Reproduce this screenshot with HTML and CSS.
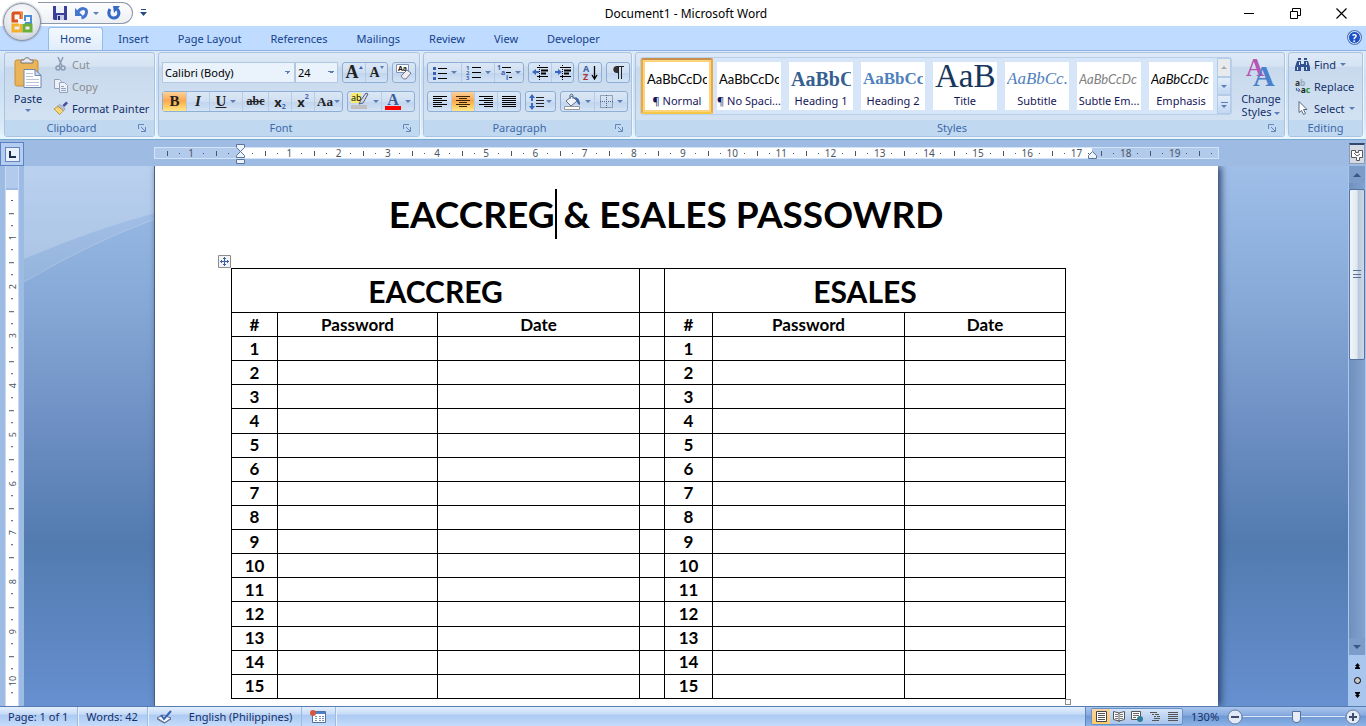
FILE: index.html
```html
<!DOCTYPE html>
<html lang="en">

<head>
    <meta charset="UTF-8">
    <meta name="viewport" content="width=device-width, initial-scale=1.0">
    <title>Document1 - Microsoft Word</title>
    <link rel="stylesheet" href="styles.css">
</head>

<body>
    <header class="titlebar">
        <div class="quick-access">
            <button type="button" aria-label="Save">
                <svg width="14" height="14" viewBox="0 0 14 14"><path d="M0 0h14v14H1L0 13z" fill="#3b3f9c"/><path d="M3 0h8v7H3z" fill="#eef2fb"/><path d="M4 9h7v5H4z" fill="#c5cbe6"/><path d="M5 10h2v4H5z" fill="#25296d"/></svg>
            </button>
            <button type="button" aria-label="Undo" class="undo">
                <svg width="14" height="14" viewBox="0 0 14 14"><path d="M3 6C6 1 12 2 11.500 6c0 3-2 5-5 6" fill="none" stroke="#4576cd" stroke-width="3"/><path d="M0 2v8h8z" fill="#4576cd"/></svg>
                <span class="caret"></span>
            </button>
            <button type="button" aria-label="Repeat">
                <svg width="14" height="14" viewBox="0 0 14 14"><path d="M3 3C0 8 3 12 7 12s7-5 3-9" fill="none" stroke="#3569c5" stroke-width="3"/><path d="M6 0h7L7 7z" fill="#3569c5"/></svg>
            </button>
        </div>
        <button type="button" class="qa-more" aria-label="Customize Quick Access Toolbar">
            <svg width="7" height="8" viewBox="0 0 7 8"><path d="M1 0h5v1H1zM0 3h7L3.500 7z" fill="#234b88"/></svg>
        </button>
        <h1>Document1 - Microsoft Word</h1>
        <div class="window-buttons">
            <button type="button" aria-label="Minimize"><svg width="11" height="11" viewBox="0 0 11 11"><path d="M0 5.500h10" stroke="#000"/></svg></button>
            <button type="button" aria-label="Restore"><svg width="11" height="11" viewBox="0 0 11 11"><path d="M.5 3.500h7v7h-7zM2.500 3V.5h8v7H8" fill="none" stroke="#000"/></svg></button>
            <button type="button" aria-label="Close"><svg width="11" height="11" viewBox="0 0 11 11"><path d="M.5.5l10 10m0-10l-10 10" stroke="#000" stroke-width="1.200"/></svg></button>
        </div>
        <button type="button" class="office-button" aria-label="Office Button">
            <svg width="24" height="24" viewBox="0 0 24 24" fill="none" stroke-width="3">
                <path d="M8 11H3V4q0-1 1-1h7v6" stroke="#d9541c"/>
                <path d="M10 3h2v6" stroke="#f08a3c" stroke-width="2"/>
                <path d="M15 11V6h6v7h-6" stroke="#4a8fd6" stroke-width="2"/>
                <path d="M11 14v7H3v-6h6" stroke="#f3b02b"/>
                <path d="M14 15h7v6h-7v-7" stroke="#6cae3a"/>
            </svg>
        </button>
    </header>

    <nav class="tabs">
        <a href="#home" class="tab active">Home</a>
        <a href="#insert" class="tab">Insert</a>
        <a href="#layout" class="tab">Page Layout</a>
        <a href="#references" class="tab">References</a>
        <a href="#mailings" class="tab">Mailings</a>
        <a href="#review" class="tab">Review</a>
        <a href="#view" class="tab">View</a>
        <a href="#developer" class="tab">Developer</a>
        <button type="button" class="help" aria-label="Help">?</button>
    </nav>

    <div class="ribbon">
        <section class="group clipboard">
            <div class="group-body">
                <button type="button" class="big-button">
                    <svg width="28" height="32" viewBox="0 0 28 32"><rect x="1" y="3" width="23" height="26" rx="2" fill="#eab558" stroke="#c98f38"/><path d="M7 6V3h3c0-3 6-3 6 0h3v3z" fill="#e8e8ec" stroke="#77777f"/><path d="M10 12.500h11l6 6v12H10z" fill="#fff" stroke="#6d87ad"/><path d="M21 12.500v6h6z" fill="#cfdcef" stroke="#6d87ad"/><path d="M12 16.500h7M12 19.500h7M12 22.500h13M12 25.500h13M12 28.500h13" stroke="#b6c4da"/></svg>
                    <span>Paste</span>
                    <span class="caret"></span>
                </button>
                <div class="button-list">
                    <button type="button" disabled>
                        <svg width="14" height="14" viewBox="0 0 14 14" fill="none" stroke="#8c9bb2" stroke-width="1.500"><path d="M4 0l4 9M9 0L5 9"/><circle cx="4" cy="11" r="2"/><circle cx="9" cy="11" r="2"/></svg>
                        Cut
                    </button>
                    <button type="button" disabled>
                        <svg width="14" height="14" viewBox="0 0 14 14" fill="#eef2f8" stroke="#93a2ba"><path d="M.5.5h5l2 2v7h-7z"/><path d="M5.500 3.500h5l3 3v7h-8zM7 7.500h3M7 9.500h5M7 11.500h5"/></svg>
                        Copy
                    </button>
                    <button type="button">
                        <svg width="14" height="14" viewBox="0 0 15 14"><path d="M9 4l4-4 2 2-4 4z" fill="#4b4f9b"/><path d="M6 3l6 5-2 2-6-5z" fill="#b9c2d4" stroke="#6e7a92" stroke-width=".5"/><path d="M4 5l6 5-4 4L0 8z" fill="#f2cb5d" stroke="#a87c25" stroke-width=".7"/><path d="M2 8l5 4M5 7l4 4" stroke="#fff0b0"/></svg>
                        Format Painter
                    </button>
                </div>
            </div>
            <h2>Clipboard <svg class="launcher" width="8" height="8" viewBox="0 0 8 8"><path d="M.5 5V.5H6M3 3l4 4M7.500 3v4.500H3" fill="none" stroke="#6486b8"/></svg></h2>
        </section>

        <section class="group font">
            <div class="group-body rows">
                <div class="row">
                    <div class="combos">
                        <select class="combo font-name" aria-label="Font"><option>Calibri (Body)</option></select>
                        <select class="combo font-size" aria-label="Font size"><option>24</option></select>
                    </div>
                    <div class="set">
                        <button type="button" class="glyph" aria-label="Grow Font"><b class="big-a">A</b><i class="up"></i></button>
                        <button type="button" class="glyph" aria-label="Shrink Font"><b class="small-a">A</b><i class="down"></i></button>
                    </div>
                    <div class="set">
                        <button type="button" aria-label="Clear Formatting"><svg width="18" height="17" viewBox="0 0 18 17"><path d="M1.500.5h12v8h-12z" fill="#fff" stroke="#7d93b8"/><text x="3" y="7" font-size="7" font-weight="bold" fill="#222">Aa</text><path d="M6 12l6-6 4 3-5 6q-3 1-5-3z" fill="#f0edf2" stroke="#77778c"/></svg></button>
                    </div>
                </div>
                <div class="row">
                    <div class="set format">
                        <button type="button" class="glyph on"><b>B</b></button>
                        <button type="button" class="glyph"><em>I</em></button>
                        <button type="button" class="glyph wide"><u>U</u><span class="caret"></span></button>
                        <button type="button" class="glyph strike"><s>abc</s></button>
                        <button type="button" class="glyph sans">x<sub>2</sub></button>
                        <button type="button" class="glyph sans">x<sup>2</sup></button>
                        <button type="button" class="glyph case">Aa<span class="caret"></span></button>
                    </div>
                    <div class="set">
                        <button type="button" class="wide" aria-label="Text Highlight Color"><svg width="18" height="17" viewBox="0 0 18 17"><path d="M0 0h10v10H0z" fill="#f6ee6a"/><text x="0" y="8" font-size="9" fill="#111">ab</text><path d="M15 0l2 1-5 9-4 1 2-4z" fill="#d6dce8" stroke="#555f78"/><path d="M0 12h16v4H0z" fill="#c0c0c0"/></svg><span class="caret"></span></button>
                        <button type="button" class="wide font-color" aria-label="Font Color"><b>A</b><span class="caret"></span></button>
                    </div>
                </div>
            </div>
            <h2>Font <svg class="launcher" width="8" height="8" viewBox="0 0 8 8"><path d="M.5 5V.5H6M3 3l4 4M7.500 3v4.500H3" fill="none" stroke="#6486b8"/></svg></h2>
        </section>

        <section class="group paragraph">
            <div class="group-body rows">
                <div class="row">
                    <div class="set">
                        <button type="button" class="wide" aria-label="Bullets"><svg width="14" height="14" viewBox="0 0 14 14"><path d="M0 1h3v3H0zM0 6h3v3H0zM0 11h3v3H0z" fill="#3b62b0"/><path d="M5 2.500h9M5 7.500h9M5 12.500h9" stroke="#000"/></svg><span class="caret"></span></button>
                        <button type="button" class="wide" aria-label="Numbering"><svg width="15" height="15" viewBox="0 0 15 15"><g font-size="6" font-weight="bold" fill="#3b62b0"><text x="0" y="5">1</text><text x="0" y="10">2</text><text x="0" y="15">3</text></g><path d="M6 2.500h9M6 7.500h9M6 12.500h9" stroke="#000"/></svg><span class="caret"></span></button>
                        <button type="button" class="multi" aria-label="Multilevel List"><svg width="17" height="15" viewBox="0 0 17 15"><g font-size="7" font-weight="bold" fill="#3b62b0"><text x="0" y="5">1</text><text x="4" y="10">a</text><text x="9" y="15">i</text></g><path d="M5 2.500h9M9 7.500h5M12 12.500h3" stroke="#000"/></svg><span class="caret"></span></button>
                    </div>
                    <div class="set">
                        <button type="button" aria-label="Decrease Indent"><svg width="16" height="15" viewBox="0 0 16 15"><path d="M5 2.500h11M5 11.500h11" stroke="#000"/><path d="M9 5.500h7M9 8.500h5" stroke="#000" stroke-width="2"/><path d="M7.500 0v15" stroke="#000" stroke-dasharray="1 1"/><path d="M0 7l4-3v2h3v2H4v2z" fill="#3767bf"/></svg></button>
                        <button type="button" aria-label="Increase Indent"><svg width="16" height="15" viewBox="0 0 16 15"><path d="M5 2.500h11M5 11.500h11" stroke="#000"/><path d="M9 5.500h7M9 8.500h5" stroke="#000" stroke-width="2"/><path d="M7.500 0v15" stroke="#000" stroke-dasharray="1 1"/><path d="M7 7L3 4v2H0v2h3v2z" fill="#3767bf"/></svg></button>
                    </div>
                    <div class="set">
                        <button type="button" aria-label="Sort"><svg width="15" height="17" viewBox="0 0 15 17"><g font-size="9" font-weight="bold"><text x="0" y="8" fill="#3c62a9">A</text><text x="0" y="16" fill="#a73336">Z</text></g><path d="M11.500 2v13M9 11l2.500 4 2.500-4" fill="none" stroke="#000" stroke-width="1.300"/></svg></button>
                    </div>
                    <div class="set">
                        <button type="button" aria-label="Show paragraph marks"><svg width="11" height="13" viewBox="0 0 11 13"><path d="M6 0H4C-1 0-1 7 4 7h2z" fill="#333"/><path d="M5.500 0v13M8.500 0v13M4 .5h7" stroke="#222"/></svg></button>
                    </div>
                </div>
                <div class="row">
                    <div class="set align">
                        <button type="button" aria-label="Align Left"><svg width="14" height="12" viewBox="0 0 14 12"><path d="M0 .5h14M0 2.500h9M0 4.500h14M0 6.500h9M0 8.500h14M0 10.500h9" stroke="#000"/></svg></button>
                        <button type="button" class="on" aria-label="Center"><svg width="14" height="12" viewBox="0 0 14 12"><path d="M0 .5h14M3 2.500h8M0 4.500h14M3 6.500h8M0 8.500h14M3 10.500h8" stroke="#3a2500"/></svg></button>
                        <button type="button" aria-label="Align Right"><svg width="14" height="12" viewBox="0 0 14 12"><path d="M0 .5h14M5 2.500h9M0 4.500h14M5 6.500h9M0 8.500h14M5 10.500h9" stroke="#000"/></svg></button>
                        <button type="button" aria-label="Justify"><svg width="14" height="12" viewBox="0 0 14 12"><path d="M0 .5h14M0 2.500h14M0 4.500h14M0 6.500h14M0 8.500h14M0 10.500h14" stroke="#000"/></svg></button>
                    </div>
                    <div class="set">
                        <button type="button" class="spacing" aria-label="Line spacing"><svg width="15" height="16" viewBox="0 0 15 16"><path d="M3 0l3 4H4v3H2V4H0zM3 16l3-4H4V9H2v3H0z" fill="#3767bf"/><path d="M7 3.500h8M7 6.500h8M7 9.500h8M7 12.500h8" stroke="#222"/></svg><span class="caret"></span></button>
                    </div>
                    <div class="set">
                        <button type="button" class="wide" aria-label="Shading"><svg width="17" height="16" viewBox="0 0 17 16"><path d="M2 7l6-5 5 5-6 5z" fill="#f2f5fa" stroke="#5b6c8b"/><path d="M6 5V1q2-2 3 0v4" fill="none" stroke="#5b6c8b"/><path d="M10 3q6 0 6 8-3-1-3-4z" fill="#3c66a9"/><path d="M.5 12.500h15v3H.5z" fill="#fff" stroke="#999"/></svg><span class="caret"></span></button>
                        <button type="button" class="wide" aria-label="Borders"><svg width="13" height="13" viewBox="0 0 13 13"><path d="M.5.5h12v12H.5zM6.500 0v13M0 6.500h13" fill="none" stroke="#52637e" stroke-dasharray="1 1"/></svg><span class="caret"></span></button>
                    </div>
                </div>
            </div>
            <h2>Paragraph <svg class="launcher" width="8" height="8" viewBox="0 0 8 8"><path d="M.5 5V.5H6M3 3l4 4M7.500 3v4.500H3" fill="none" stroke="#6486b8"/></svg></h2>
        </section>

        <section class="group styles">
            <div class="group-body">
                <div class="gallery">
                    <button type="button" class="style selected"><span class="preview">AaBbCcDc</span><span class="name">¶ Normal</span></button>
                    <button type="button" class="style"><span class="preview">AaBbCcDc</span><span class="name">¶ No Spaci...</span></button>
                    <button type="button" class="style"><span class="preview heading1">AaBbCc</span><span class="name">Heading 1</span></button>
                    <button type="button" class="style"><span class="preview heading2">AaBbCc</span><span class="name">Heading 2</span></button>
                    <button type="button" class="style"><span class="preview title">AaB</span><span class="name">Title</span></button>
                    <button type="button" class="style"><span class="preview subtitle">AaBbCc.</span><span class="name">Subtitle</span></button>
                    <button type="button" class="style"><span class="preview subtle">AaBbCcDc</span><span class="name">Subtle Em...</span></button>
                    <button type="button" class="style"><span class="preview emphasis">AaBbCcDc</span><span class="name">Emphasis</span></button>
                    <div class="gallery-scroll">
                        <button type="button" aria-label="Row up" disabled><i class="up"></i></button>
                        <button type="button" aria-label="Row down"><span class="caret"></span></button>
                        <button type="button" aria-label="More styles" class="more"><span class="caret"></span></button>
                    </div>
                </div>
                <button type="button" class="big-button">
                    <svg width="30" height="32" viewBox="0 0 30 32" font-weight="bold"><text x="0" y="19" font-size="25" class="serif" fill="#b455b4">A</text><text x="7" y="29" font-size="30" class="serif" fill="#4a80cc">A</text></svg>
                    <span>Change</span>
                    <span>Styles <i class="caret mid"></i></span>
                </button>
            </div>
            <h2>Styles <svg class="launcher" width="8" height="8" viewBox="0 0 8 8"><path d="M.5 5V.5H6M3 3l4 4M7.500 3v4.500H3" fill="none" stroke="#6486b8"/></svg></h2>
        </section>

        <section class="group editing">
            <div class="group-body">
                <div class="button-list">
                    <button type="button">
                        <svg width="15" height="13" viewBox="0 0 15 13"><path d="M2 3h4v3h3V3h4l2 6v4H9V9H6v4H0V9zM3 0h3v2H3zM9 0h3v2H9z" fill="#31528f"/><path d="M2 9h1v3H2zM11 9h1v3h-1zM4 4h1v3H4zM11 4h1v3h-1z" fill="#dce8f8"/></svg>
                        Find <span class="caret"></span>
                    </button>
                    <button type="button">
                        <svg width="15" height="15" viewBox="0 0 16 15" font-weight="bold"><text x="0" y="7" font-size="9" fill="#333">a<tspan fill="#9aa6b8">b</tspan></text><text x="6" y="14" font-size="9" fill="#222">a<tspan fill="#23932e">c</tspan></text><path d="M1.500 9v2.500H5M3.500 9.500l2 2-2 2" fill="none" stroke="#3c5ea0"/></svg>
                        Replace
                    </button>
                    <button type="button">
                        <svg width="15" height="14" viewBox="0 0 15 14"><path d="M4 .5v11l2.500-2 2 4 2-1-2-4h3.500z" fill="#fff" stroke="#5a6785"/></svg>
                        Select <span class="caret"></span>
                    </button>
                </div>
            </div>
            <h2>Editing</h2>
        </section>
    </div>

    <main class="workspace">
        <div class="corner">
            <button type="button" class="tab-stop" aria-label="Left tab"><svg width="7" height="7" viewBox="0 0 7 7"><path d="M1 0v6h6" fill="none" stroke="#1c2e4e" stroke-width="2"/></svg></button>
        </div>
        <div class="ruler-row">
            <div class="ruler">
                <span>1</span><span class="zero"></span><span>1</span><span>2</span><span>3</span><span>4</span><span>5</span><span>6</span><span>7</span><span>8</span><span>9</span><span>10</span><span>11</span><span>12</span><span>13</span><span>14</span><span>15</span><span>16</span><span>17</span><span>18</span><span>19</span><span class="end"></span>
                <svg class="indent-left" width="9" height="20" viewBox="0 0 9 20"><path d="M.5.5h8v3l-4 4-4-4zM4.500 7.500l4 4v2h-8v-2zM.5 15.500h8v4h-8z" fill="#eef3fa" stroke="#5c7499"/></svg>
                <svg class="indent-right" width="9" height="8" viewBox="0 0 9 8"><path d="M4.500.5l4 4v3h-8v-3z" fill="#eef3fa" stroke="#5c7499"/></svg>
            </div>
        </div>
        <div class="ruler-toggle">
            <button type="button" aria-label="View Ruler"><svg width="12" height="12" viewBox="0 0 12 12"><path d="M.5 1.500h4v2h3v-2h4v7h-3v3h-3v-3h-5z" fill="#fff" stroke="#58595f"/><path d="M3 4l3 3 3-2" fill="none" stroke="#58595f"/></svg></button>
        </div>

        <div class="v-ruler">
            <span>1</span><span>2</span><span>3</span><span>4</span><span>5</span><span>6</span><span>7</span><span>8</span><span>9</span><span>10</span>
        </div>

        <div class="canvas">
            <svg class="swoosh" viewBox="0 0 1324 540" preserveAspectRatio="none"><path d="M0 93Q68 64 131 47L420 0H0z" fill="#fff" opacity=".2"/><path d="M0 116Q68 76 131 53L420 0H0z" fill="#fff" opacity=".1"/><path d="M0 116Q68 76 131 53" fill="none" stroke="#fff" opacity=".2"/></svg>
            <article class="page">
                <p class="doc-title">EACCREG<span class="cursor"></span> &amp; ESALES PASSOWRD</p>
                <div class="table-wrap">
                    <table>
                        <colgroup>
                            <col class="c-num"><col class="c-pass"><col class="c-date"><col class="c-gap"><col class="c-num2"><col class="c-pass2"><col class="c-date2">
                        </colgroup>
                        <thead>
                            <tr class="system"><th colspan="3">EACCREG</th><th></th><th colspan="3">ESALES</th></tr>
                            <tr class="labels"><th>#</th><th>Password</th><th>Date</th><th></th><th>#</th><th>Password</th><th>Date</th></tr>
                        </thead>
                        <tbody>
                            <tr><td>1</td><td></td><td></td><td></td><td>1</td><td></td><td></td></tr>
                            <tr><td>2</td><td></td><td></td><td></td><td>2</td><td></td><td></td></tr>
                            <tr><td>3</td><td></td><td></td><td></td><td>3</td><td></td><td></td></tr>
                            <tr><td>4</td><td></td><td></td><td></td><td>4</td><td></td><td></td></tr>
                            <tr><td>5</td><td></td><td></td><td></td><td>5</td><td></td><td></td></tr>
                            <tr><td>6</td><td></td><td></td><td></td><td>6</td><td></td><td></td></tr>
                            <tr><td>7</td><td></td><td></td><td></td><td>7</td><td></td><td></td></tr>
                            <tr><td>8</td><td></td><td></td><td></td><td>8</td><td></td><td></td></tr>
                            <tr><td>9</td><td></td><td></td><td></td><td>9</td><td></td><td></td></tr>
                            <tr><td>10</td><td></td><td></td><td></td><td>10</td><td></td><td></td></tr>
                            <tr><td>11</td><td></td><td></td><td></td><td>11</td><td></td><td></td></tr>
                            <tr><td>12</td><td></td><td></td><td></td><td>12</td><td></td><td></td></tr>
                            <tr><td>13</td><td></td><td></td><td></td><td>13</td><td></td><td></td></tr>
                            <tr><td>14</td><td></td><td></td><td></td><td>14</td><td></td><td></td></tr>
                            <tr><td>15</td><td></td><td></td><td></td><td>15</td><td></td><td></td></tr>
                        </tbody>
                    </table>
                    <svg class="move-handle" width="13" height="13" viewBox="0 0 13 13"><path d="M.5.5h12v12H.5z" fill="#f4f4f4" stroke="#8c8c8c"/><path d="M6.500 2v9M2 6.500h9M5 3.500h3M5 9.500h3M3.500 5v3M9.500 5v3" stroke="#3b5fa8"/></svg>
                    <span class="size-handle"></span>
                </div>
            </article>
        </div>

        <div class="scrollbar">
            <button type="button" aria-label="Scroll up"><i class="up"></i></button>
            <div class="track"><div class="thumb"></div></div>
            <button type="button" aria-label="Scroll down"><i class="down"></i></button>
            <div class="browse">
                <button type="button" aria-label="Previous Page"><svg width="5" height="6" viewBox="0 0 5 6"><path d="M2.500 0L5 3H0zM2.500 2L5 5v1H0V5z"/></svg></button>
                <button type="button" aria-label="Select Browse Object"><svg width="7" height="7" viewBox="0 0 7 7"><circle cx="3.500" cy="3.500" r="3" fill="#c9c9c9" stroke="#000"/></svg></button>
                <button type="button" aria-label="Next Page"><svg width="5" height="6" viewBox="0 0 5 6"><path d="M0 0h5v1L2.500 4 0 1zM0 3h5L2.500 6z"/></svg></button>
            </div>
        </div>
    </main>

    <footer class="statusbar">
        <button type="button" class="status-item">Page: 1 of 1</button>
        <button type="button" class="status-item">Words: 42</button>
        <button type="button" class="status-item proof" aria-label="Proofing"><svg width="17" height="14" viewBox="0 0 17 14"><path d="M1 8l6-3 8 3-6 5z" fill="#f3f6fb" stroke="#5f6f8f"/><path d="M1 9l7 4 7-4" fill="none" stroke="#5f6f8f"/><path d="M5 5l3 4 7-8" fill="none" stroke="#3463b5" stroke-width="2"/></svg></button>
        <button type="button" class="status-item language">English (Philippines)</button>
        <button type="button" class="status-item macro" aria-label="Record macro"><svg width="16" height="13" viewBox="0 0 16 13"><path d="M2.500 1.500h13v11h-13z" fill="#fff" stroke="#52719f"/><path d="M3 2h12v2H3z" fill="#4e7fc8"/><path d="M5 6h2v1H5zm4 0h2v1H9zm3 0h2v1h-2zM5 8h2v1H5zm4 0h2v1H9zm3 0h2v1h-2zM5 10h2v1H5zm4 0h2v1H9zm3 0h2v1h-2z" fill="#7c8fb0"/><circle cx="3" cy="3" r="3" fill="#d4563f"/></svg></button>
        <div class="status-right">
            <div class="views">
                <button type="button" class="on" aria-label="Print Layout"><svg width="11" height="11" viewBox="0 0 11 11"><path d="M.5.5h10v10H.5z" fill="#fff" stroke="#444"/><path d="M2 2.500h7M2 4.500h7M2 6.500h7M2 8.500h7" stroke="#555"/></svg></button>
                <button type="button" aria-label="Full Screen Reading"><svg width="12" height="11" viewBox="0 0 12 11"><path d="M.5.5L6 2 11.500.5v8L6 10 .5 8.500zM6 2v9" fill="#fff" stroke="#555"/><path d="M2 3.500h3M2 5.500h3M7 3.500h3M7 5.500h3M7 7.500h3M2 7.500h3" stroke="#777"/></svg></button>
                <button type="button" aria-label="Web Layout"><svg width="12" height="11" viewBox="0 0 12 11"><path d="M.5.5h9v8h-9z" fill="#fff" stroke="#555"/><path d="M2 2.500h6M2 4.500h6M2 6.500h3" stroke="#666"/><circle cx="9" cy="8" r="3" fill="#2b7f9a"/></svg></button>
                <button type="button" aria-label="Outline"><svg width="10" height="9" viewBox="0 0 10 9"><path d="M0 .5h7M2 2.500h2M5 2.500h4M4 4.500h2M7 4.500h3M4 6.500h6M2 8.500h7" stroke="#555"/></svg></button>
                <button type="button" aria-label="Draft"><svg width="10" height="9" viewBox="0 0 10 9"><path d="M0 .5h10M0 2.500h10M0 4.500h10M0 6.500h10M0 8.500h10" stroke="#555"/></svg></button>
            </div>
            <button type="button" class="zoom-level">130%</button>
            <button type="button" class="zoom-button" aria-label="Zoom out"><svg width="16" height="16" viewBox="0 0 16 16"><circle cx="8" cy="8" r="7" fill="#dfe9f8" stroke="#6b7c9c"/><path d="M4 8h8" stroke="#3f4d68" stroke-width="2"/></svg></button>
            <input type="range" class="zoom-slider" min="0" max="100" value="53" aria-label="Zoom">
            <button type="button" class="zoom-button" aria-label="Zoom in"><svg width="16" height="16" viewBox="0 0 16 16"><circle cx="8" cy="8" r="7" fill="#dfe9f8" stroke="#6b7c9c"/><path d="M4 8h8M8 4v8" stroke="#3f4d68" stroke-width="2"/></svg></button>
        </div>
    </footer>
</body>

</html>
```
FILE: styles.css
```css
* {
    box-sizing: border-box;
}

body {
    display: flex;
    flex-direction: column;
    height: 100vh;
    margin: 0;
    overflow: hidden;
    background-color: #bfdbff;
    font-family: "Noto Sans", sans-serif;
    font-size: 11px;
    color: #15306b;
}

button {
    display: flex;
    align-items: center;
    justify-content: center;
    padding: 0;
    border: 0;
    background: none;
    color: inherit;
    font: inherit;
    white-space: nowrap;
}

svg {
    display: block;
    flex: none;
    overflow: visible;
}

.caret,
.down,
.up {
    display: inline-block;
    flex: none;
    border: 3px solid transparent;
    border-bottom-width: 0;
    border-top-color: #5a7fb8;
}

.up {
    border-top-width: 0;
    border-bottom: 3px solid #3a62a8;
}

.mid {
    vertical-align: middle;
}

/* title bar */
.titlebar {
    position: relative;
    z-index: 2;
    display: flex;
    align-items: center;
    height: 26px;
    flex: none;
    background-color: #fff;
}

.quick-access {
    display: flex;
    align-items: center;
    gap: 8px;
    width: 95px;
    height: 22px;
    margin: 0 0 0 38px;
    padding-left: 15px;
    border: 1px solid #8d97a8;
    border-left: 0;
    border-radius: 0 11px 11px 0;
    background: linear-gradient(#fdfdfe, #eceff4);
}

.undo {
    gap: 4px;
}

.qa-more {
    margin-left: 7px;
}

.titlebar h1 {
    flex: 1;
    margin: 0;
    padding-right: 19px;
    text-align: center;
    font-size: 12px;
    font-weight: normal;
    color: #000;
}

.window-buttons {
    display: flex;
    gap: 35px;
    padding-right: 19px;
}

.office-button {
    position: absolute;
    left: 3px;
    top: 3px;
    width: 38px;
    height: 38px;
    border: 1px solid #8a93a3;
    border-radius: 50%;
    background: radial-gradient(circle at 50% 30%, #fff, #e3e6ec 60%, #b6becb);
    box-shadow: 0 0 2px #64748f;
}

/* tabs */
.tabs {
    display: flex;
    gap: 1px;
    height: 24px;
    flex: none;
    padding: 1px 5px 0 48px;
}

.tab {
    padding: 0 13px;
    border: 1px solid transparent;
    border-bottom: 0;
    line-height: 22px;
    color: #15428b;
    text-decoration: none;
}

.tab.active {
    padding: 0 11px;
    border-color: #93bce8;
    border-radius: 3px 3px 0 0;
    background: linear-gradient(#f4f9ff, #e0ecfa);
}

.help {
    width: 13px;
    height: 13px;
    margin: 4px 0 0 auto;
    border: 1px solid #dbe9fb;
    border-radius: 50%;
    background-color: #1c50c4;
    box-shadow: 0 0 0 1px #5578b8;
    font-size: 10px;
    font-weight: bold;
    color: #fff;
}

/* ribbon */
.ribbon {
    display: flex;
    gap: 3px;
    height: 90px;
    flex: none;
    padding: 1px 3px 2px 4px;
    border: 1px solid #8db2e3;
    border-width: 1px 0;
    border-bottom-color: #78a9d2;
    background: linear-gradient(#dce9f8, #cadef3 30%, #d9e9f8 85%, #e6f8fd);
}

.group {
    display: flex;
    flex-direction: column;
    flex: none;
    border: 1px solid #a9c3e0;
    border-radius: 3px;
    background: linear-gradient(#dee9f6, #d5e3f2 16%, #c8d9ed 17%, #d6e5f5);
    box-shadow: 1px 1px 0 #edf6ff;
}

.group-body {
    display: flex;
    flex: 1;
    min-height: 0;
}

.group h2 {
    display: grid;
    grid-template-columns: 1fr;
    align-items: center;
    height: 16px;
    margin: 0;
    border-radius: 0 0 2px 2px;
    background-color: #c1d8f1;
    font-size: 11px;
    font-weight: normal;
    line-height: 16px;
    text-align: center;
    color: #3e6aaa;
}

.group h2:has(.launcher) {
    grid-template-columns: 1fr 14px;
    padding-right: 2px;
}

.clipboard {
    width: 151px;
}

.font {
    width: 262px;
}

.paragraph {
    width: 209px;
}

.group.styles {
    flex: 1;
    min-width: 0;
}

.editing {
    width: 75px;
}

.big-button {
    flex-direction: column;
    justify-content: flex-start;
    flex: none;
    width: 46px;
    padding-top: 4px;
    line-height: 13px;
}

.big-button svg {
    margin-bottom: 3px;
}

.big-button > .caret {
    margin-top: 4px;
}

.button-list {
    display: flex;
    flex-direction: column;
    gap: 6px;
    padding: 3px 0 0 3px;
}

.button-list button {
    justify-content: flex-start;
    gap: 4px;
    height: 16px;
}

.button-list button:disabled {
    color: #8d8d8d;
}

.editing .button-list {
    padding-left: 6px;
}

/* tool rows */
.rows {
    flex-direction: column;
    gap: 8px;
    padding: 9px 3px 0;
}

.row {
    display: flex;
    gap: 4px;
    height: 21px;
}

.combos {
    display: flex;
    width: 180px;
}

.combo {
    appearance: none;
    min-width: 0;
    padding: 0 2px;
    border: 1px solid #b3c7e1;
    border-radius: 0;
    background: linear-gradient(45deg, transparent 50%, #5a7fb8 50%) right 6px center / 3px 3px no-repeat,
        linear-gradient(135deg, #5a7fb8 50%, transparent 50%) right 3px center / 3px 3px no-repeat,
        #eaf2fb;
    font: inherit;
    color: #000;
}

.font-name {
    flex: 1;
}

.font-size {
    width: 43px;
}

.set {
    display: flex;
    border: 1px solid #8faed5;
    border-radius: 3px;
    background: linear-gradient(#dbe7f5, #cfdff1 50%, #c0d4ed 51%, #d3e3f5);
}

.set button {
    width: 22px;
    border-left: 1px solid #b5cbe6;
}

.set button:first-child {
    border-left: 0;
}

.format .glyph,
.align button {
    width: 23px;
}

.set .wide {
    width: 33px;
    gap: 4px;
}

.format .strike {
    width: 26px;
}

.set .case {
    width: 28px;
    gap: 1px;
}

.set .spacing {
    width: 29px;
    gap: 2px;
}

.set .multi {
    width: 29px;
    gap: 1px;
}

.set .on {
    background: linear-gradient(#fbd29a, #fba750 45%, #fcbb52 60%, #ffe788);
}

.glyph {
    font-family: "Liberation Serif", serif;
    font-size: 15px;
    font-weight: bold;
    color: #222;
}

.glyph s {
    font-size: 12px;
}

.glyph sub,
.glyph sup {
    font-size: 7px;
    color: #3d66b3;
}

.glyph sub {
    align-self: flex-end;
}

.glyph sup {
    align-self: flex-start;
}

.set .sans {
    font-family: "Noto Sans", sans-serif;
    font-size: 13px;
}

.set .case {
    font-size: 13px;
}

.big-a {
    font-size: 18px;
}

.small-a {
    font-size: 14px;
}

.glyph .up,
.glyph .down {
    align-self: flex-start;
    margin-top: 3px;
    border-left-width: 2px;
    border-right-width: 2px;
}

.font-color b {
    width: 16px;
    height: 17px;
    border-bottom: 4px solid #f00;
    font-family: "Liberation Serif", serif;
    font-size: 16px;
    line-height: 13px;
    color: #38599b;
}

/* styles gallery */
.gallery {
    display: flex;
    flex: 1;
    min-width: 0;
    margin: 4px 6px 5px 4px;
    border: 1px solid #b9d0ed;
    border-radius: 3px;
    background-color: #d6e6f8;
}

.style {
    flex: 1;
    flex-direction: column;
    min-width: 0;
    padding: 2px;
    border: 2px solid transparent;
    border-radius: 2px;
}

.style.selected {
    border-color: #c7914c #eda93c #f6c848;
    background-color: #fdd37c;
}

.preview,
.name {
    width: 100%;
    overflow: hidden;
    background-color: #fff;
}

.preview {
    height: 31px;
    border: 0 solid #fff;
    border-width: 0 2px;
    text-align: left;
    font-family: Lato, sans-serif;
    font-size: 13px;
    line-height: 34px;
    color: #000;
}

.name {
    height: 17px;
    line-height: 16px;
    color: #15155a;
}

.heading1,
.heading2,
.title,
.subtitle {
    font-family: "Liberation Serif", serif;
    font-size: 20px;
    font-weight: bold;
    color: #365f91;
}

.heading2 {
    font-size: 17px;
    color: #4f81bd;
}

.title {
    font-size: 33px;
    font-weight: normal;
    line-height: 28px;
    color: #17365d;
}

.subtitle {
    font-size: 17px;
    font-style: italic;
    font-weight: normal;
    color: #4f81bd;
}

.subtle,
.emphasis {
    font-style: italic;
}

.subtle {
    color: #808080;
}

.gallery-scroll {
    display: flex;
    flex-direction: column;
    width: 14px;
}

.gallery-scroll button {
    flex: 1;
    border: 1px solid #b4cbe8;
    background: linear-gradient(#e3edf9, #c3d8f2);
}

.gallery-scroll button:disabled {
    background: #e9eaec;
}

.gallery-scroll button:disabled .up {
    border-bottom-color: #a8abb0;
}

.gallery-scroll .more {
    flex-direction: column;
    gap: 2px;
}

.more::before {
    content: "";
    width: 7px;
    border-top: 1px solid #5a7fb8;
}

.serif {
    font-family: "Liberation Serif", serif;
}

/* workspace */
.workspace {
    display: grid;
    grid-template-columns: 24px 1fr 18px;
    grid-template-rows: 26px 1fr;
    flex: 1;
    min-height: 0;
    background-color: #9ebbe3;
}

.corner {
    display: flex;
    align-items: center;
    justify-content: center;
    margin-top: 2px;
    border: 1px solid #5c82c6;
    background-color: #b5cdf0;
}

.tab-stop {
    width: 15px;
    height: 15px;
    border: 1px solid #6485bd;
    background-color: #e8f0fb;
}

.ruler {
    position: relative;
    display: flex;
    max-width: 1065px;
    height: 12px;
    margin: 7px auto 0;
    padding: 0 2px 0 13px;
    background: linear-gradient(#fff, #fff) 86px 0 / 80% 100% no-repeat #b2caeb;
    box-shadow: inset 0 0 0 1px #d3e3f8;
    color: #4b5563;
}

.ruler span {
    flex: 1;
    text-align: center;
    font-size: 10px;
    line-height: 12px;
    background: linear-gradient(#4b5563, #4b5563) 0 50% / 1px 5px no-repeat,
        linear-gradient(#4b5563, #4b5563) 25% 50% / 1px 1px no-repeat,
        linear-gradient(#4b5563, #4b5563) 75% 50% / 1px 1px no-repeat;
}

/* the page edge cuts the last centimetre short */
.ruler .end {
    flex: 0 0 17px;
    background-position: 0 50%, 12px 50%, 12px 50%;
}

.indent-left {
    position: absolute;
    left: 82px;
    top: -3px;
}

.indent-right {
    position: absolute;
    right: 122px;
    top: 4px;
}

.ruler-toggle {
    padding: 3px 1px 0;
}

.ruler-toggle button {
    width: 16px;
    height: 21px;
    padding-top: 2px;
    border: 1px solid #8e9ab0;
    border-top: 2px solid #33496f;
    background-color: #d5dbe5;
}

.v-ruler {
    display: flex;
    flex-direction: column;
    margin: 0 5px;
    padding: 47px 0 1px;
    background: linear-gradient(#4b5563, #4b5563) 50% 34px / 2px 1px no-repeat,
        linear-gradient(#b2caeb 22px, #9ebbe3 22px, #9ebbe3 24px, #fff 24px);
    border: 1px solid #c8dbf5;
    border-width: 0 1px;
    color: #4b5563;
}

.v-ruler span {
    display: flex;
    flex: 1;
    align-items: center;
    justify-content: center;
    writing-mode: vertical-rl;
    transform: rotate(180deg);
    font-size: 9px;
    background: linear-gradient(#4b5563, #4b5563) 50% 100% / 5px 1px no-repeat,
        linear-gradient(#4b5563, #4b5563) 50% 25% / 2px 1px no-repeat,
        linear-gradient(#4b5563, #4b5563) 50% 75% / 2px 1px no-repeat;
}

.canvas {
    position: relative;
    min-height: 0;
    overflow: hidden;
    background: linear-gradient(#9fbfe9, #86a9d7 25%, #6b8dc1 50%, #527bb0 70%, #6690cf);
}

.swoosh {
    position: absolute;
    width: 100%;
    height: 100%;
}

.page {
    position: relative;
    max-width: 1064px;
    height: 100%;
    margin: 0 auto;
    padding: 22px 126px 0 85px;
    border-left: 1px solid #4d5e7a;
    background-color: #fff;
    box-shadow: 3px 0 7px #2d446b;
    font-family: Lato, "Liberation Sans", sans-serif;
    font-weight: bold;
    color: #000;
}

.doc-title {
    margin: 0 0 29px;
    text-align: center;
    font-size: 37px;
    line-height: 51px;
}

.cursor {
    display: inline-block;
    width: 2px;
    height: 50px;
    margin-right: -2px;
    background-color: #000;
    vertical-align: -11px;
}

.table-wrap {
    position: relative;
    width: 98%;
    margin-left: -9px;
}

.page table {
    width: 100%;
    height: 431px;
    border-collapse: collapse;
    table-layout: fixed;
    font-size: 17px;
    line-height: 20px;
    text-align: center;
}

.page th,
.page td {
    padding: 0;
    border: 1px solid #000;
}

.page .system {
    height: 44px;
    font-size: 30px;
}

.page .labels {
    height: 24px;
}

.c-num {
    width: 46px;
}

.c-pass {
    width: 160px;
}

.c-date {
    width: 202px;
}

.c-gap {
    width: 25px;
}

.c-num2 {
    width: 48px;
}

.c-pass2 {
    width: 192px;
}

.move-handle {
    position: absolute;
    left: -13px;
    top: -13px;
}

.size-handle {
    position: absolute;
    right: -5px;
    bottom: -6px;
    width: 6px;
    height: 6px;
    border: 1px solid #8c8c8c;
    background-color: #fff;
}

/* scrollbar */
.scrollbar {
    display: flex;
    flex-direction: column;
    padding: 0 1px;
    background-color: #a9c6ef;
}

.scrollbar > button {
    height: 17px;
    background-color: #7c9cc9;
}

.scrollbar .up,
.scrollbar .down {
    border-width: 4px;
    border-top-color: #3c5685;
}

.scrollbar .up {
    border-top-width: 0;
    border-color: transparent transparent #3c5685;
}

.scrollbar .down {
    border-bottom-width: 0;
}

.track {
    flex: 1;
    padding-top: 6px;
    background: linear-gradient(90deg, #6f8fbd, #84a3cf);
}

.thumb {
    height: 38%;
    border: 1px solid #56729f;
    border-radius: 2px;
    background: linear-gradient(#5c7399, #5c7399) 50% 48% / 8px 1px no-repeat,
        linear-gradient(#5c7399, #5c7399) 50% 50% / 8px 1px no-repeat,
        linear-gradient(#5c7399, #5c7399) 50% 52% / 8px 1px no-repeat,
        linear-gradient(90deg, #f2f6fc, #dfe7f0 50%, #b9c9dd 60%, #cdd9e8);
}

.browse {
    display: flex;
    flex-direction: column;
    justify-content: space-evenly;
    height: 51px;
}

/* status bar */
.statusbar {
    display: flex;
    height: 20px;
    flex: none;
    border-top: 1px solid #567db1;
    background: linear-gradient(#e3eefc, #c9ddf8 35%, #accaf2 45%, #c5dcfb);
}

.status-item {
    padding: 0 9px 0 8px;
    border-right: 1px solid #9bbbe3;
    box-shadow: 1px 0 0 #e5f0fd;
}

.proof,
.language {
    border-right: 0;
    box-shadow: none;
}

.language {
    padding-left: 7px;
    border-right: 1px solid #9bbbe3;
}

.status-right {
    display: flex;
    align-items: center;
    width: 281px;
    margin-left: auto;
    padding: 0 5px;
    border-left: 1px solid #5f87bd;
    background: linear-gradient(#a9c5ec, #89ace0 40%, #7099d4 50%, #8db4e8);
}

.views {
    display: flex;
    height: 17px;
    border: 1px solid #6a90c8;
    border-radius: 2px;
    background: linear-gradient(#d5e4f8, #a8c5ec);
}

.views button {
    width: 18px;
}

.views .on {
    background: linear-gradient(#f8d5a2, #fccb67);
}

.zoom-level {
    margin: 0 8px;
}

.zoom-slider {
    appearance: none;
    flex: 1;
    min-width: 0;
    height: 14px;
    margin: 0;
    background: linear-gradient(#dbe8fb, #dbe8fb) 0 50% / 100% 1px no-repeat;
}

.zoom-slider::-webkit-slider-thumb {
    appearance: none;
    width: 9px;
    height: 12px;
    border: 1px solid #5b6f93;
    border-radius: 1px 1px 5px 5px;
    background-color: #e6edf8;
}
```
